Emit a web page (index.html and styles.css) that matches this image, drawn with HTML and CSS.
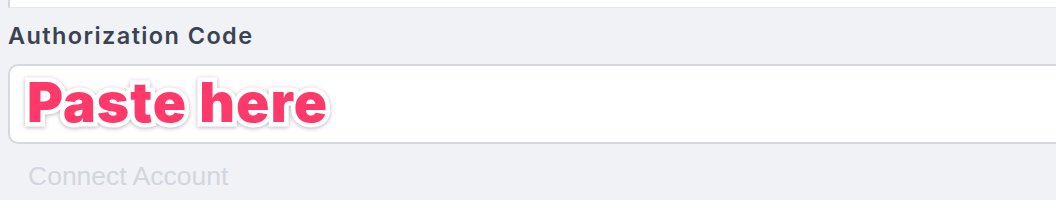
FILE: index.html
```html
<!DOCTYPE html>
<html lang="en">
<head>
	<meta charset="UTF-8">
	<title>Authorization Code</title>
	<link rel="stylesheet" href="styles.css">
</head>
<body>
	<div class='form'>
		<div class='prev-field'></div>

		<label class='field-label' for='code'>Authorization Code</label>
		<div class='code-input' id='code'>
			<span class='paste-note'>Paste here</span>
		</div>

		<button class='connect' disabled>Connect Account</button>
	</div>
</body>
</html>
```

FILE: styles.css
```css
*{
	box-sizing: border-box;
	margin: 0px;
	padding: 0px;
}

body{
	background-color: #f1f2f6;
	font-family: Inter, "Noto Sans", sans-serif;
}

.form{
	display: flex;
	flex-direction: column;
	align-items: flex-start;
	padding-left: 8px;
}

.prev-field{
	width: 100%;
	height: 8px;
	background-color: white;
	border-left: 2px solid #d5d8dd;
	border-bottom: 1px solid #e6e8ec;
}

.field-label{
	margin-top: 14px;
	font-size: 23.5px;
	line-height: 28px;
	font-weight: 600;
	letter-spacing: 1.4px;
	color: #3a4354;
}

.code-input{
	width: 1100px;
	height: 80px;
	margin-top: 14px;
	padding-left: 17px;
	padding-bottom: 5px;
	display: flex;
	align-items: center;
	background-color: white;
	border: 2px solid #d5d8dd;
	border-radius: 10px;
}

.paste-note{
	font-size: 55px;
	font-weight: 900;
	letter-spacing: 1.1px;
	color: #ff3a6a;
	-webkit-text-stroke: 9px white;
	paint-order: stroke fill;
	filter: drop-shadow(0px 1px 2px rgba(0, 0, 0, 0.28));
}

.connect{
	margin-top: 17px;
	margin-left: 20px;
	background: transparent;
	border: none;
	font-family: "Liberation Sans", Arial, sans-serif;
	font-size: 26.5px;
	color: #d2d6de;
}
```
